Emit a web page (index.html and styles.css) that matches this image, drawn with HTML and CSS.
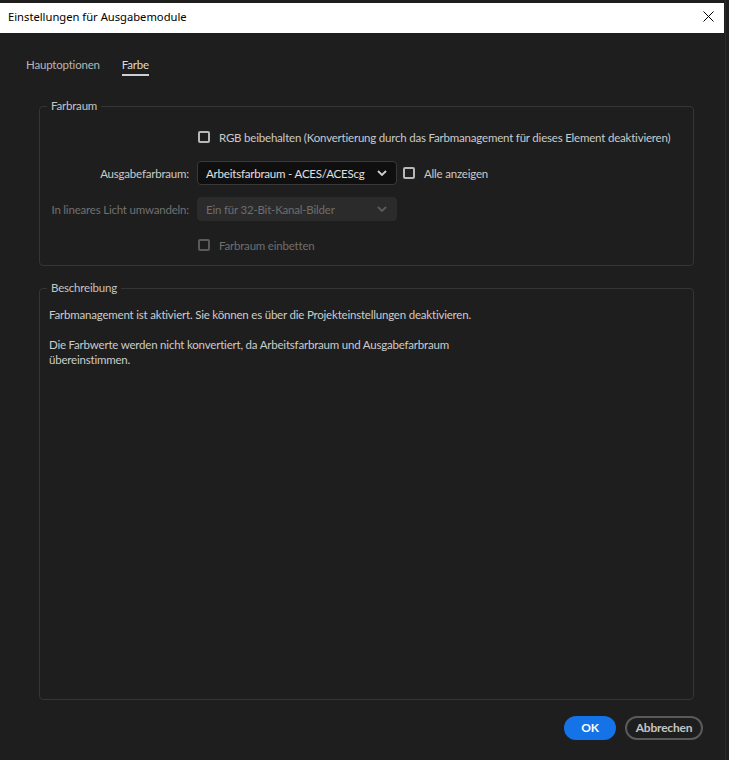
FILE: index.html
```html
<!DOCTYPE html>
<html lang="de">
<head>
<meta charset="utf-8">
<title>Einstellungen für Ausgabemodule</title>
<link rel="stylesheet" href="styles.css">
</head>
<body>
<div class="screen">
  <div class="window">
    <div class="titlebar">
      <span class="title">Einstellungen für Ausgabemodule</span>
      <svg class="close" width="11" height="11" viewBox="0 0 11 11"><path d="M0.5 0.5L10.5 10.5M10.5 0.5L0.5 10.5" stroke="#000" stroke-width="1" fill="none"/></svg>
    </div>
    <div class="main">
      <nav class="tabs">
        <span class="tab">Hauptoptionen</span>
        <span class="tab active">Farbe</span>
      </nav>

      <fieldset class="group colorspace">
        <legend>Farbraum</legend>
        <div class="form">
          <span></span>
          <label class="check"><span class="box"></span>RGB beibehalten (Konvertierung durch das Farbmanagement für dieses Element deaktivieren)</label>

          <span class="lbl">Ausgabefarbraum:</span>
          <div class="ctrl">
            <div class="select"><span>Arbeitsfarbraum - ACES/ACEScg</span><svg width="10" height="6" viewBox="0 0 10 6"><path d="M1 1l4 4 4-4" fill="none" stroke="currentColor" stroke-width="1.8"/></svg></div>
            <label class="check"><span class="box"></span>Alle anzeigen</label>
          </div>

          <span class="lbl disabled">In lineares Licht umwandeln:</span>
          <div class="ctrl">
            <div class="select disabled"><span>Ein für 32-Bit-Kanal-Bilder</span><svg width="10" height="6" viewBox="0 0 10 6"><path d="M1 1l4 4 4-4" fill="none" stroke="currentColor" stroke-width="1.8"/></svg></div>
          </div>

          <span></span>
          <label class="check disabled"><span class="box"></span>Farbraum einbetten</label>
        </div>
      </fieldset>

      <fieldset class="group desc">
        <legend>Beschreibung</legend>
        <p>Farbmanagement ist aktiviert. Sie können es über die Projekteinstellungen deaktivieren.</p>
        <p>Die Farbwerte werden nicht konvertiert, da Arbeitsfarbraum und Ausgabefarbraum<br>übereinstimmen.</p>
      </fieldset>

      <div class="footer">
        <button class="btn primary">OK</button>
        <button class="btn secondary">Abbrechen</button>
      </div>
    </div>
  </div>
  <div class="edge"></div>
</div>
</body>
</html>
```

FILE: styles.css
```css
html, body {
  margin: 0;
  padding: 0;
  background: #1e1e1e;
}

body {
  font-family: Lato, "Noto Sans", sans-serif;
  font-size: 11.5px;
  letter-spacing: -0.2px;
  color: #c8c8c8;
}

.screen {
  display: flex;
  height: 760px;
  box-sizing: border-box;
}

.window {
  width: 724px;
  display: flex;
  flex-direction: column;
  padding-top: 3px;
  box-sizing: border-box;
}

.edge {
  width: 1px;
  margin-left: 1px;
  background: #2a2a2a;
}

.titlebar {
  height: 30px;
  background: #ffffff;
  color: #000;
  display: flex;
  align-items: center;
  justify-content: space-between;
  padding: 0 10px 0 8px;
  font-family: "Noto Sans", "Open Sans", sans-serif;
  font-size: 11.2px;
  letter-spacing: 0;
  flex: none;
}

.title {
  line-height: 16px;
  margin-top: -2px;
}

.close {
  margin-top: -4px;
}

.main {
  flex: 1;
  display: flex;
  flex-direction: column;
  padding: 0 21px 20px 26px;
  min-height: 0;
}

.tabs {
  display: flex;
  gap: 22px;
  padding-top: 24px;
}

.tab {
  line-height: 16px;
  padding-bottom: 1px;
  border-bottom: 2px solid transparent;
  color: #b6b6b6;
}

.tab.active {
  color: #dadada;
  border-bottom-color: #cfcfcf;
}

.group {
  margin: 22px 9px 0 13px;
  border: 1px solid #353535;
  border-radius: 4px;
  padding: 11px 9px 8px 9px;
  min-width: 0;
}

.group legend {
  line-height: 16px;
  padding: 0 4px;
  margin-left: -2px;
  color: #c4c4c4;
}

.form {
  display: grid;
  grid-template-columns: 140px 1fr;
  grid-auto-rows: 24px;
  column-gap: 8px;
  row-gap: 12px;
  align-items: center;
}

.lbl {
  text-align: right;
  white-space: nowrap;
  color: #cacaca;
}

.lbl.disabled {
  color: #717171;
}

.ctrl {
  display: flex;
  align-items: center;
  gap: 6px;
}

.check {
  display: flex;
  align-items: center;
  gap: 9px;
  white-space: nowrap;
  color: #cacaca;
}

.check .box {
  width: 12px;
  height: 12px;
  box-sizing: border-box;
  border: 2px solid #b8b8b8;
  border-radius: 2px;
  margin-left: 1px;
  flex: none;
}

.check.disabled {
  color: #6f6f6f;
}

.check.disabled .box {
  border-color: #5a5a5a;
}

.ctrl .check .box {
  margin-left: 0;
}

.select {
  width: 200px;
  height: 24px;
  box-sizing: border-box;
  background: #0f0f0f;
  border: 1px solid #393939;
  border-radius: 4px;
  padding: 0 9px 0 8px;
  display: flex;
  align-items: center;
  justify-content: space-between;
  color: #e0e0e0;
  white-space: nowrap;
}

.select svg {
  color: #d0d0d0;
  flex: none;
}

.select.disabled {
  background: #2b2b2b;
  border-color: #2b2b2b;
  color: #6d6d6d;
}

.select.disabled svg {
  color: #5c5c5c;
}

.group.desc {
  margin-top: 14px;
  flex: 1;
  padding-top: 11px;
}

.desc p {
  margin: 0 0 15px;
  line-height: 15px;
  color: #cccccc;
}

.footer {
  display: flex;
  justify-content: flex-end;
  gap: 9px;
  margin-top: 16px;
}

.btn {
  height: 24px;
  border-radius: 12px;
  font-family: Lato, "Noto Sans", sans-serif;
  font-size: 12px;
  font-weight: 700;
  letter-spacing: -0.2px;
  line-height: 20px;
  box-sizing: border-box;
  cursor: pointer;
  padding: 0;
}

.btn.primary {
  background: #1473e6;
  border: none;
  color: #ffffff;
  width: 52px;
}

.btn.secondary {
  background: transparent;
  border: 2px solid #5a5a5a;
  color: #c4c4c4;
  width: 78px;
}
```
